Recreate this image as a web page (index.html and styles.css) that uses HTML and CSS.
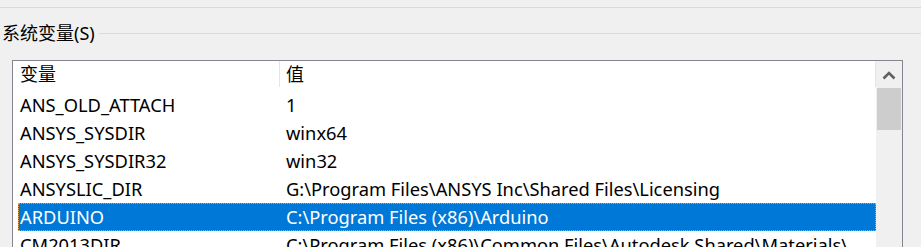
FILE: index.html
```html
<!DOCTYPE html>
<html lang="zh-CN">

<head>
    <meta charset="utf-8">
    <meta name="viewport" content="width=device-width, initial-scale=1.0">
    <title>系统变量</title>
    <link rel="stylesheet" href="styles.css">
</head>

<body>
    <div class="top_line"></div>

    <div class="group_head">
        <span class="group_label">系统变量(S)</span>
        <span class="group_rule"></span>
    </div>

    <div class="list_box">
        <div class="list_rows">
            <div class="list_header">
                <span class="head_name">变量</span>
                <span class="head_sep"></span>
                <span class="head_value">值</span>
                <span class="head_sep"></span>
            </div>

            <div class="row">
                <span class="name">ANS_OLD_ATTACH</span>
                <span class="value">1</span>
            </div>
            <div class="row">
                <span class="name">ANSYS_SYSDIR</span>
                <span class="value">winx64</span>
            </div>
            <div class="row">
                <span class="name">ANSYS_SYSDIR32</span>
                <span class="value">win32</span>
            </div>
            <div class="row">
                <span class="name">ANSYSLIC_DIR</span>
                <span class="value">G:\Program Files\ANSYS Inc\Shared Files\Licensing</span>
            </div>
            <div class="row valgt">
                <span class="name">ARDUINO</span>
                <span class="value">C:\Program Files (x86)\Arduino</span>
            </div>
            <div class="row">
                <span class="name">CM2013DIR</span>
                <span class="value">C:\Program Files (x86)\Common Files\Autodesk Shared\Materials\</span>
            </div>
        </div>

        <!-- lodret scrollbar -->
        <div class="scrollbar">
            <div class="scroll_arrow">
                <svg width="14" height="10" viewBox="0 0 14 10">
                    <polyline points="1.5,8.5 7,3 12.5,8.5" fill="none" stroke="#606060" stroke-width="2.6" />
                </svg>
            </div>
            <div class="scroll_thumb"></div>
        </div>
    </div>
</body>

</html>
```

FILE: styles.css
```css
html,
body {
    background-color: #f0f0f0;
    font-family: "Noto Sans", "Noto Sans CJK SC", sans-serif;
    font-size: 18px;
    color: #000000;
    margin: 0px;
    overflow: hidden;
}

.top_line {
    margin-top: 7px;
    border-top: 1px solid #dadada;
}

/* gruppe overskrift med streg */
.group_head {
    display: flex;
    align-items: center;
    height: 20px;
    margin-top: 15px;
    padding-left: 2px;
}

.group_label {
    line-height: 20px;
    white-space: nowrap;
}

.group_rule {
    flex: 1;
    border-top: 1px solid #dadada;
    margin-left: 4px;
}

.list_box {
    display: flex;
    margin: 17px 0px 0px 12px;
    width: 889px;
    height: 200px;
    border: 1px solid #828790;
    background-color: #ffffff;
    overflow: hidden;
}

.list_rows {
    flex: 1;
    min-width: 0;
}

.list_header {
    display: flex;
    height: 30px;
    line-height: 26px;
}

.head_name {
    width: 259px;
    padding-left: 7px;
}

.head_sep {
    width: 1px;
    height: 26px;
    background-color: #e5e5e5;
}

.head_value {
    flex: 1;
    padding-left: 6px;
}

.row {
    display: flex;
    height: 28px;
    line-height: 28px;
    font-size: 18.3px;
    margin-left: 5px;
    padding-left: 2px;
    white-space: nowrap;
    overflow: hidden;
}

.name {
    width: 266px;
    flex-shrink: 0;
}

.valgt {
    background-color: #0078d7;
    color: #ffffff;
    outline: 1px dotted #e0a050;
    outline-offset: -1px;
}

.scrollbar {
    width: 26px;
    background-color: #f0f0f0;
}

.scroll_arrow {
    display: flex;
    justify-content: center;
    align-items: center;
    height: 27px;
    padding-top: 1px;
    box-sizing: border-box;
}

.scroll_thumb {
    height: 42px;
    margin: 0px 1px;
    background-color: #cdcdcd;
}
```
